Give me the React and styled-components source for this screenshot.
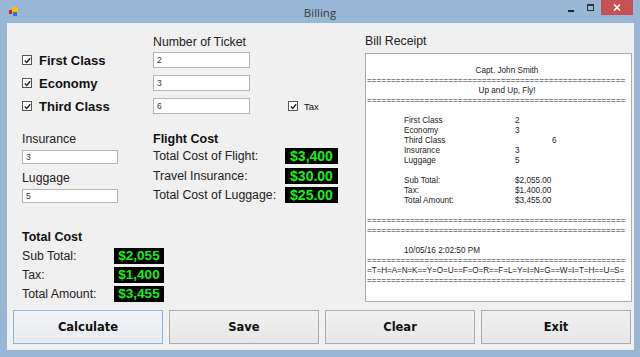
import React from 'react';
import styled, { createGlobalStyle } from 'styled-components';

const GlobalStyle = createGlobalStyle`
  html, body {
    margin: 0;
    padding: 0;
  }
  body {
    font-family: "Liberation Sans", Arial, sans-serif;
    background: #98b6d6;
  }
`;

const Window = styled.div`
  width: 640px;
  height: 357px;
  background: #98b6d6;
  display: flex;
  flex-direction: column;
  overflow: hidden;
`;

const TitleBar = styled.div`
  height: 23px;
  flex: 0 0 23px;
  display: grid;
  grid-template-columns: 1fr auto 1fr;
  align-items: start;
`;

const AppIcon = styled.div`
  padding: 7px 0 0 9px;
  line-height: 0;
`;

const Title = styled.div`
  font-family: "Open Sans", "Noto Sans", sans-serif;
  font-size: 11.5px;
  color: #3a3a3a;
  line-height: 23px;
  padding-top: 1px;
`;

const Controls = styled.div`
  justify-self: end;
  display: flex;
  align-items: flex-start;
  margin-right: 7px;
`;

const MinButton = styled.div`
  width: 20px;
  height: 15px;
  display: flex;
  justify-content: center;
  &::after {
    content: '';
    width: 6px;
    height: 2px;
    margin-top: 10px;
    background: #222;
  }
`;

const MaxButton = styled.div`
  width: 19px;
  height: 15px;
  display: flex;
  justify-content: center;
  margin-right: 1px;
  &::after {
    content: '';
    width: 5px;
    height: 4px;
    margin-top: 4px;
    border: 1px solid #333;
    border-top-width: 2px;
  }
`;

const CloseButton = styled.div`
  width: 32px;
  height: 15px;
  background: #c75050;
  display: flex;
  align-items: center;
  justify-content: center;
`;

const Client = styled.div`
  flex: 1;
  margin: 0 6px 7px 7px;
  background: #f0f0f0;
  display: flex;
  flex-direction: column;
`;

const TopArea = styled.div`
  height: 287px;
  display: flex;
  padding-left: 15px;
`;

const LeftForm = styled.div`
  width: 343px;
  display: flex;
  flex-direction: column;
`;

const TicketHeader = styled.div`
  margin: 12px 0 3px 131px;
  height: 14px;
  line-height: 14px;
  font-size: 12.3px;
  color: #222;
`;

const TicketGrid = styled.div`
  display: grid;
  grid-template-columns: 131px 97px 38px auto;
  grid-auto-rows: 16px;
  row-gap: 7px;
  align-items: center;
`;

const CheckLabel = styled.label`
  display: flex;
  align-items: center;
  gap: ${(p) => (p.$small ? '6px' : '7px')};
  font-size: ${(p) => (p.$small ? '9.5px' : '13px')};
  font-weight: ${(p) => (p.$small ? 'normal' : 'bold')};
  color: #111;
`;

const Box = styled.span`
  width: 8px;
  height: 8px;
  border: 1px solid #555;
  background: #fff;
  display: flex;
  align-items: center;
  justify-content: center;
`;

const TextBox = styled.div`
  box-sizing: border-box;
  width: ${(p) => p.$w || 97}px;
  height: ${(p) => p.$h || 16}px;
  border: 1px solid #b5b5b5;
  background: #fff;
  padding-left: 3px;
  font-size: 8.5px;
  color: #333;
  display: flex;
  align-items: center;
`;

const MidSection = styled.div`
  margin-top: 18px;
  display: flex;
`;

const FieldColumn = styled.div`
  width: 131px;
  display: flex;
  flex-direction: column;
`;

const FieldLabel = styled.div`
  height: 14px;
  line-height: 14px;
  font-size: 12.3px;
  color: #222;
  margin: ${(p) => (p.$first ? '0' : '7px')} 0 4px;
`;

const CostColumn = styled.div`
  display: flex;
  flex-direction: column;
`;

const SectionTitle = styled.div`
  height: 14px;
  line-height: 14px;
  font-size: 12.5px;
  font-weight: bold;
  color: #111;
`;

const CostList = styled.div`
  display: grid;
  grid-template-columns: ${(p) => p.$label}px auto;
  grid-auto-rows: 16px;
  row-gap: ${(p) => p.$gap}px;
  margin-top: ${(p) => p.$top}px;
  align-items: center;
  font-size: 12.3px;
  color: #222;
`;

const Badge = styled.div`
  width: ${(p) => p.$w}px;
  height: 16px;
  background: #000;
  color: #19ef19;
  font-weight: bold;
  font-size: ${(p) => p.$size || 14}px;
  line-height: 16px;
  text-align: center;
`;

const TotalSection = styled.div`
  margin-top: 27px;
  display: flex;
  flex-direction: column;
`;

const ReceiptPanel = styled.div`
  width: 267px;
  display: flex;
  flex-direction: column;
`;

const ReceiptTitle = styled.div`
  margin: 11px 0 5px;
  height: 14px;
  line-height: 14px;
  font-size: 12.3px;
  color: #222;
`;

const ReceiptBox = styled.div`
  box-sizing: border-box;
  height: 249px;
  border: 1px solid #acacac;
  background: #fff;
  padding: 2px 4px 0 1px;
  overflow: hidden;
  font-size: 8.2px;
  color: #222;
`;

const Line = styled.div`
  height: 10px;
  line-height: 10px;
  white-space: pre;
  text-align: ${(p) => (p.$center ? 'center' : 'left')};
  padding-left: ${(p) => (p.$center ? 20 : p.$indent || 0)}px;
  letter-spacing: ${(p) => (p.$tight ? '-0.12px' : 'normal')};
`;

const ItemLine = styled.div`
  height: 10px;
  line-height: 10px;
  display: grid;
  grid-template-columns: 111px auto;
  padding-left: 37px;
  white-space: pre;
`;

const ItemValue = styled.span`
  padding-left: ${(p) => p.$shift || 0}px;
`;

const ButtonRow = styled.div`
  display: grid;
  grid-template-columns: repeat(4, 150px);
  column-gap: 6px;
  padding: 0 3px 0 6px;
  height: 34px;
`;

const Button = styled.button`
  box-sizing: border-box;
  height: 34px;
  border: 1px solid ${(p) => (p.$focused ? '#84b7e8' : '#adadad')};
  background: ${(p) =>
    p.$focused
      ? 'linear-gradient(#f2f4f7, #e8ebee)'
      : 'linear-gradient(#f0f0f0, #e6e6e6)'};
  font-family: "DejaVu Sans", Verdana, sans-serif;
  font-weight: bold;
  font-size: 11.5px;
  color: #111;
  padding: 0;
  cursor: pointer;
`;

const Check = () => (
  <Box>
    <svg width="7" height="7" viewBox="0 0 7 7">
      <path d="M0.8 3.6 L2.7 5.5 L6.2 1.2" fill="none" stroke="#222" strokeWidth="1.4" />
    </svg>
  </Box>
);

const EQ = '='.repeat(54);

const classes = [
  { id: 'first', label: 'First Class', count: '2' },
  { id: 'eco', label: 'Economy', count: '3' },
  { id: 'third', label: 'Third Class', count: '6' },
];

const flightCosts = [
  ['Total Cost of Flight:', '$3,400'],
  ['Travel Insurance:', '$30.00'],
  ['Total Cost of Luggage:', '$25.00'],
];

const totals = [
  ['Sub Total:', '$2,055'],
  ['Tax:', '$1,400'],
  ['Total Amount:', '$3,455'],
];

const receiptItems = [
  ['First Class', '2'],
  ['Economy', '3'],
  ['Third Class', '6', 37],
  ['Insurance', '3'],
  ['Luggage', '5'],
];

const receiptTotals = [
  ['Sub Total:', '$2,055.00'],
  ['Tax:', '$1,400.00'],
  ['Total Amount:', '$3,455.00'],
];

export default function App() {
  return (
    <>
      <GlobalStyle />
      <Window>
        <TitleBar>
          <AppIcon>
            <svg width="9" height="9" viewBox="0 0 9 9">
              <rect x="3" y="0" width="6" height="5" fill="#f2c200" />
              <rect x="0" y="3" width="3" height="4" fill="#d02020" />
              <rect x="4" y="5" width="4" height="4" fill="#3a6fd0" />
            </svg>
          </AppIcon>
          <Title>Billing</Title>
          <Controls>
            <MinButton />
            <MaxButton />
            <CloseButton>
              <svg width="8" height="7" viewBox="0 0 8 7">
                <path d="M1 0.5 L7 6.5 M7 0.5 L1 6.5" stroke="#fff" strokeWidth="1.6" />
              </svg>
            </CloseButton>
          </Controls>
        </TitleBar>

        <Client>
          <TopArea>
            <LeftForm>
              <TicketHeader>Number of Ticket</TicketHeader>
              <TicketGrid>
                {classes.map((c, i) => (
                  <React.Fragment key={c.id}>
                    <CheckLabel>
                      <Check />
                      {c.label}
                    </CheckLabel>
                    <TextBox>{c.count}</TextBox>
                    <span />
                    {i === 2 ? (
                      <CheckLabel $small>
                        <Check />
                        Tax
                      </CheckLabel>
                    ) : (
                      <span />
                    )}
                  </React.Fragment>
                ))}
              </TicketGrid>

              <MidSection>
                <FieldColumn>
                  <FieldLabel $first>Insurance</FieldLabel>
                  <TextBox $w={96} $h={14}>3</TextBox>
                  <FieldLabel>Luggage</FieldLabel>
                  <TextBox $w={96} $h={14}>5</TextBox>
                </FieldColumn>
                <CostColumn>
                  <SectionTitle>Flight Cost</SectionTitle>
                  <CostList $label={132} $gap={3.5} $top={2}>
                    {flightCosts.map(([label, value]) => (
                      <React.Fragment key={label}>
                        <span>{label}</span>
                        <Badge $w={53}>{value}</Badge>
                      </React.Fragment>
                    ))}
                  </CostList>
                </CostColumn>
              </MidSection>

              <TotalSection>
                <SectionTitle>Total Cost</SectionTitle>
                <CostList $label={92} $gap={3} $top={4}>
                  {totals.map(([label, value]) => (
                    <React.Fragment key={label}>
                      <span>{label}</span>
                      <Badge $w={50} $size={13.5}>{value}</Badge>
                    </React.Fragment>
                  ))}
                </CostList>
              </TotalSection>
            </LeftForm>

            <ReceiptPanel>
              <ReceiptTitle>Bill Receipt</ReceiptTitle>
              <ReceiptBox>
                <Line> </Line>
                <Line $center>Capt. John Smith</Line>
                <Line>{EQ}</Line>
                <Line $center>Up and Up, Fly!</Line>
                <Line>{EQ}</Line>
                <Line> </Line>
                {receiptItems.map(([label, value, shift]) => (
                  <ItemLine key={label}>
                    <span>{label}</span>
                    <ItemValue $shift={shift}>{value}</ItemValue>
                  </ItemLine>
                ))}
                <Line> </Line>
                {receiptTotals.map(([label, value]) => (
                  <ItemLine key={label}>
                    <span>{label}</span>
                    <ItemValue>{value}</ItemValue>
                  </ItemLine>
                ))}
                <Line> </Line>
                <Line>{EQ}</Line>
                <Line>{EQ}</Line>
                <Line> </Line>
                <Line $indent={37}>10/05/16 2:02:50 PM</Line>
                <Line>{EQ}</Line>
                <Line $tight>=T=H=A=N=K==Y=O=U==F=O=R==F=L=Y=I=N=G==W=I=T=H==U=S=</Line>
                <Line>{EQ}</Line>
              </ReceiptBox>
            </ReceiptPanel>
          </TopArea>

          <ButtonRow>
            <Button $focused>Calculate</Button>
            <Button>Save</Button>
            <Button>Clear</Button>
            <Button>Exit</Button>
          </ButtonRow>
        </Client>
      </Window>
    </>
  );
}
